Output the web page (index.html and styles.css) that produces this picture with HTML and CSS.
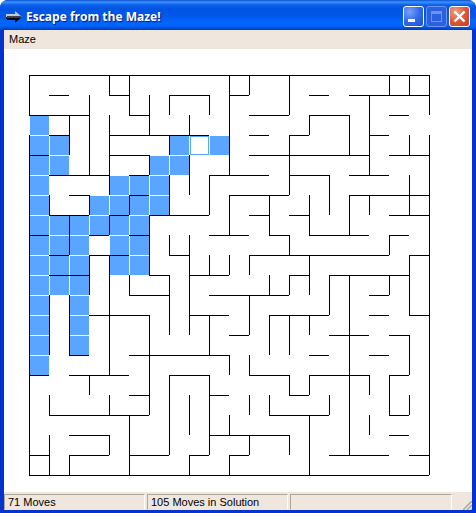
FILE: index.html
```
<!DOCTYPE html>
<html lang="en">
<head>
    <meta charset="UTF-8">
    <meta name="viewport" content="width=device-width, initial-scale=1.0">
    <title>Escape from the Maze!</title>
    <link rel="stylesheet" href="styles.css">
</head>
<body>
    <div class="window">
        <header class="title-bar">
            <svg class="app-icon" width="16" height="16" viewBox="0 0 16 16" aria-hidden="true">
                <path d="M0 5h9V2l7 6H0z" fill="#c3c8d6"/>
                <path d="M0 8h16l-7 6v-3H1z" fill="#05070f"/>
                <path d="M1 7h14v2H1z" fill="#3c4152"/>
            </svg>
            <h1>Escape from the Maze!</h1>
            <div class="controls">
                <button type="button" class="control" aria-label="Minimize">
                    <svg width="19" height="19" viewBox="0 0 19 19"><path d="M4 12h7v3H4z" fill="#fff"/></svg>
                </button>
                <button type="button" class="control maximize" aria-label="Maximize" disabled>
                    <svg width="19" height="19" viewBox="0 0 19 19"><path d="M4 4h11v11H4zM5 7v7h9V7z" fill="#6d94ee" fill-rule="evenodd"/></svg>
                </button>
                <button type="button" class="control close" aria-label="Close">
                    <svg width="19" height="19" viewBox="0 0 19 19"><path d="M4.500 4.500l10 10M14.500 4.500l-10 10" stroke="#fff" stroke-width="2.4"/></svg>
                </button>
            </div>
        </header>
        <nav class="menu-bar">
            <button type="button" class="menu">Maze</button>
        </nav>
        <main class="board">
            <svg id="maze" class="maze" width="401" height="401" viewBox="0 0 401 401" role="img" aria-label="Maze"></svg>
        </main>
        <footer class="status-bar">
            <div class="panel">71 Moves</div>
            <div class="panel">105 Moves in Solution</div>
            <div class="panel last"></div>
            <svg class="grip" width="9" height="9" viewBox="0 0 9 9" aria-hidden="true">
                <path d="M0 9l9-9M4 9l5-5M8 9l1-1" stroke="#aca899" stroke-width="1.5"/>
            </svg>
        </footer>
    </div>
    <script src="maze.js"></script>
</body>
</html>
```
FILE: styles.css
```
* {
    box-sizing: border-box;
}

body {
    margin: 0;
    background: #fff;
    font-family: "Liberation Sans", Arial, sans-serif;
    font-size: 11px;
    color: #000;
}

.window {
    display: flex;
    flex-direction: column;
    min-height: 100vh;
    padding: 0 4px 4px;
    background: #0432cf;
    border-radius: 8px 8px 0 0;
    overflow: hidden;
}

/* title bar */
.title-bar {
    display: flex;
    align-items: center;
    gap: 4px;
    height: 30px;
    margin: 0 -4px;
    padding: 3px 6px 0;
    background: linear-gradient(#0a50d0 0, #3a93ff 2px, #0a5fea 5px, #0054e3 9px, #0058ea 16px, #0066ff 22px, #0064fa 26px, #0046cc 29px, #0038b0 30px);
}

.title-bar h1 {
    flex: 1;
    margin: 0;
    font-family: "Open Sans", sans-serif;
    font-size: 12px;
    line-height: 18px;
    color: #fff;
    text-shadow: 1px 1px 1px #0a1883;
}

.controls {
    display: flex;
    gap: 2px;
}

.control {
    width: 21px;
    height: 21px;
    padding: 0;
    border: 1px solid #fff;
    border-radius: 3px;
    background: radial-gradient(circle at 30% 25%, #7aa2f8, #3269e8 50%, #1c4fd4);
}

.control svg {
    display: block;
}

.maximize {
    border-color: #6d94ee;
    background: #2a60e2;
}

.close {
    background: radial-gradient(circle at 30% 25%, #f0a088, #e0583a 50%, #c63d14);
}

/* menu */
.menu-bar {
    height: 19px;
    background: #efe7de;
}

.menu {
    padding: 0 5px;
    border: 0;
    background: none;
    font: inherit;
    line-height: 19px;
}

/* maze */
.board {
    flex: 1;
    padding: 26px 25px 16px;
    background: #fff;
}

.maze {
    display: block;
    max-width: 100%;
    shape-rendering: crispEdges;
}

.visited {
    fill: #5aa5ff;
}

.player {
    fill: #fff;
    stroke: #5aa5ff;
}

.walls {
    fill: none;
    stroke: #000;
}

/* status bar */
.status-bar {
    display: flex;
    align-items: flex-end;
    gap: 2px;
    height: 18px;
    background: #efe7de;
}

.panel {
    width: 141px;
    height: 16px;
    padding: 0 3px;
    border: 1px solid;
    border-color: #aca899 #fff #efe7de #aca899;
    line-height: 15px;
}

.last {
    flex: 1;
}

.grip {
    margin-left: 9px;
}
```
FILE: maze.js
```
const CELL = 20;

// walls as start-end ranges, one entry per grid line
const horizontal = [
    '0-20',
    '1-2 4-5 7-9 10-11 14-15 16-20',
    '0-3 5-6 11-13 14-16 18-19',
    '1-2 4-9 11-12 13-14 17-18',
    '0-1 4-6 11-17 18-20',
    '1-4 5-6 9-12 13-15 16-18',
    '2-3 5-6 10-13 16-20',
    '1-3 4-5 6-9 11-12 13-14 18-20',
    '0-1 3-4 5-6 9-11 12-13 14-17 18-19',
    '1-2 3-5 7-8 11-18 19-20',
    '1-3 6-7 8-10 13-14 15-19',
    '5-7 9-13 17-18',
    '3-6 8-10 12-15 17-18 19-20',
    '10-11 15-17 18-19',
    '2-3 5-10 14-15 17-18',
    '0-1 2-5 7-9 11-13 14-17 18-19',
    '5-6 9-10 13-14',
    '1-6 12-15 18-19',
    '2-4 9-13 18-19',
    '0-1 2-4 5-7 8-9 10-11 15-18 19-20',
    '0-20'
];

const vertical = [
    '0-2 3-20',
    '6-7 11-14 16-17 18-20',
    '2-4 7-9 11-14 19-20',
    '1-5 6-7 9-11 15-16',
    '0-1 2-6 7-8 9-15 16-17 18-19',
    '0-2 6-7 10-11 17-20',
    '1-3 4-5 7-10 12-17',
    '1-2 3-4 5-7 8-9 10-13 15-19',
    '2-3 4-6 8-13 16-18 19-20',
    '1-2 5-7 9-10 12-14 15-19',
    '0-5 6-8 9-10 14-15 17-18 19-20',
    '0-1 9-10 11-13 14-15 16-17 18-19',
    '6-8 10-11 12-14 16-17',
    '0-2 3-6 8-9 10-11 12-14 15-16 18-19',
    '2-3 6-8 9-11 12-13 15-16 17-20',
    '5-7 10-12 16-17',
    '2-4 6-8 10-19',
    '1-5 6-7 15-16 17-18',
    '0-1 8-9 10-11 15-17',
    '0-1 3-4 5-7 9-12 13-15 16-17',
    '0-2 3-20'
];

// visited columns, by row
const visited = {
    2: [0],
    3: [0, 1, 7, 9],
    4: [0, 1, 6, 7],
    5: [0, 4, 5, 6],
    6: [0, 3, 4, 5, 6],
    7: [0, 1, 2, 3, 4, 5],
    8: [0, 1, 2, 4, 5],
    9: [0, 1, 2, 4, 5],
    10: [0, 1, 2],
    11: [0, 2],
    12: [0, 2],
    13: [0, 2],
    14: [0]
};

const player = { col: 8, row: 3 };

function ranges(line) {
    return line.split(' ').map(r => r.split('-').map(n => n * CELL));
}

let cells = '';
for (const row in visited) {
    visited[row].forEach(col => {
        cells += `<rect class="visited" x="${col * CELL + 1}" y="${row * CELL + 1}" width="19" height="19"/>`;
    });
}

let walls = '';
horizontal.forEach((line, y) => {
    ranges(line).forEach(([a, b]) => {
        walls += `M${a} ${y * CELL + 0.5}H${b}`;
    });
});
vertical.forEach((line, x) => {
    ranges(line).forEach(([a, b]) => {
        walls += `M${x * CELL + 0.5} ${a}V${b}`;
    });
});

document.getElementById('maze').innerHTML = `
    ${cells}
    <rect class="player" x="${player.col * CELL + 1.5}" y="${player.row * CELL + 1.5}" width="18" height="18"/>
    <path class="walls" d="${walls}"/>
`;
```
